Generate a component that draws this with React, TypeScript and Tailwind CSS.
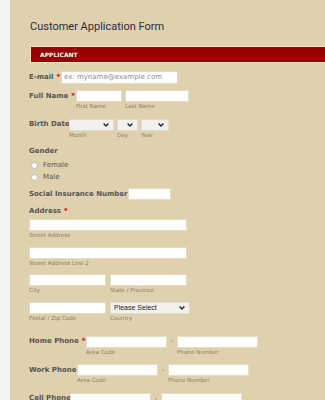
import React from "react";

const lbl = "font-bold text-[#555] text-[7px] leading-none whitespace-nowrap";
const sub = "text-[5.6px] text-[#8a806c] leading-none mt-[2px] whitespace-nowrap";

function Input({ w, h = 12 }: { w: number; h?: number }) {
  return (
    <div
      className="bg-white border border-[#e6dcc4] shrink-0"
      style={{ width: w, height: h }}
    />
  );
}

function Select({ w, text }: { w: number; text?: string }) {
  return (
    <div
      className="bg-[#f2f1ee] border border-[#e3dccb] shrink-0 flex items-center justify-between px-[2px] rounded-[1px]"
      style={{ width: w, height: 12 }}
    >
      <span
        className="text-[7px] text-[#222] leading-none pl-[1px] whitespace-nowrap"
        style={{ fontFamily: "'Liberation Sans', Arial, sans-serif" }}
      >
        {text}
      </span>
      <svg width="6" height="4" viewBox="0 0 6 4" className="mr-[2px]">
        <path d="M0.6 0.6 L3 3 L5.4 0.6" stroke="#222" strokeWidth="1.4" fill="none" />
      </svg>
    </div>
  );
}

function Star() {
  return <span className="text-[#c00] text-[7px] font-bold leading-none ml-[3px]">*</span>;
}

function Label({ w, text, star }: { w: number; text: string; star?: boolean }) {
  return (
    <div className="flex items-center h-[12px] shrink-0" style={{ width: w }}>
      <span className={lbl}>{text}</span>
      {star ? <Star /> : null}
    </div>
  );
}

function Field({ w, label, className = "" }: { w: number; label: string; className?: string }) {
  return (
    <div className={"flex flex-col " + className}>
      <Input w={w} />
      <div className={sub}>{label}</div>
    </div>
  );
}

function Radio({ label }: { label: string }) {
  return (
    <div className="flex items-center h-[12px] ml-[2px]">
      <div className="w-[7px] h-[7px] rounded-full bg-white border border-[#bbb]" />
      <span className="ml-[5px] text-[7px] text-[#555] leading-none">{label}</span>
    </div>
  );
}

function Phone({ label, star, lw }: { label: string; star?: boolean; lw: number }) {
  return (
    <div className="flex items-start">
      <Label w={lw} text={label} star={star} />
      <div className="flex items-start">
        <Field w={81} label="Area Code" />
        <div className="h-[12px] w-[10px] flex items-center justify-center text-[7px] text-[#777]">-</div>
        <Field w={81} label="Phone Number" />
      </div>
    </div>
  );
}

export default function App() {
  return (
    <div
      className="w-[325px] h-[400px] overflow-hidden flex bg-[#f4f4f4]"
      style={{ fontFamily: "Verdana, 'DejaVu Sans', sans-serif" }}
    >
      <div className="w-[10px] shrink-0 bg-[#f5f5f5]" />
      <div className="flex-1 bg-[#dfd1ae] pt-[21px]">
        <div
          className="pl-[20px] text-[11px] h-[12px] text-[#2b2b45] leading-[12px]"
          style={{ fontFamily: "Roboto, sans-serif" }}
        >
          Customer Application Form
        </div>
        <div className="ml-[20px] mt-[13px] border border-[#efe3c6] border-r-0">
          <div className="h-[15px] bg-[#990000] flex items-center pl-[9px]">
            <span className="text-white text-[6px] font-bold leading-none">APPLICANT</span>
          </div>
        </div>

        <div className="pl-[19px]">
          {/* E-mail */}
          <div className="flex items-center mt-[8px]">
            <Label w={32} text="E-mail" star />
            <div className="w-[117px] h-[13px] bg-white border border-[#e6dcc4] flex items-center pl-[2px]">
              <span className="text-[7px] text-[#8d8d8d] leading-none whitespace-nowrap">ex: myname@example.com</span>
            </div>
          </div>

          {/* Full name */}
          <div className="flex items-start mt-[6px]">
            <Label w={47} text="Full Name" star />
            <Field w={46} label="First Name" />
            <Field w={64} label="Last Name" className="ml-[3px]" />
          </div>

          {/* Birth date */}
          <div className="flex items-start mt-[9px]">
            <Label w={40} text="Birth Date" />
            <div className="flex flex-col">
              <Select w={45} />
              <div className={sub}>Month</div>
            </div>
            <div className="flex flex-col ml-[3px]">
              <Select w={21} />
              <div className={sub}>Day</div>
            </div>
            <div className="flex flex-col ml-[3px]">
              <Select w={28} />
              <div className={sub}>Year</div>
            </div>
          </div>

          {/* Gender */}
          <div className="mt-[10px]">
            <div className={lbl}>Gender</div>
            <div className="mt-[4px]">
              <Radio label="Female" />
              <Radio label="Male" />
            </div>
          </div>

          {/* SIN */}
          <div className="flex items-center mt-[5px]">
            <Label w={99} text="Social Insurance Number" />
            <Input w={43} />
          </div>

          {/* Address */}
          <div className="mt-[8px]">
            <div className="flex items-center">
              <span className={lbl}>Address</span>
              <Star />
            </div>
            <div className="mt-[4px] flex flex-col">
              <Field w={158} label="Street Address" />
              <Field w={158} label="Street Address Line 2" className="mt-[8px]" />
              <div className="flex mt-[8px]">
                <Field w={77} label="City" />
                <Field w={77} label="State / Province" className="ml-[4px]" />
              </div>
              <div className="flex mt-[8px]">
                <Field w={77} label="Postal / Zip Code" />
                <div className="flex flex-col ml-[4px]">
                  <Select w={80} text="Please Select" />
                  <div className={sub}>Country</div>
                </div>
              </div>
            </div>
          </div>

          <div className="mt-[14px]">
            <Phone label="Home Phone" star lw={57} />
          </div>
          <div className="mt-[9px]">
            <Phone label="Work Phone" lw={48} />
          </div>
          <div className="mt-[9px]">
            <Phone label="Cell Phone" lw={41} />
          </div>
        </div>
      </div>
    </div>
  );
}
